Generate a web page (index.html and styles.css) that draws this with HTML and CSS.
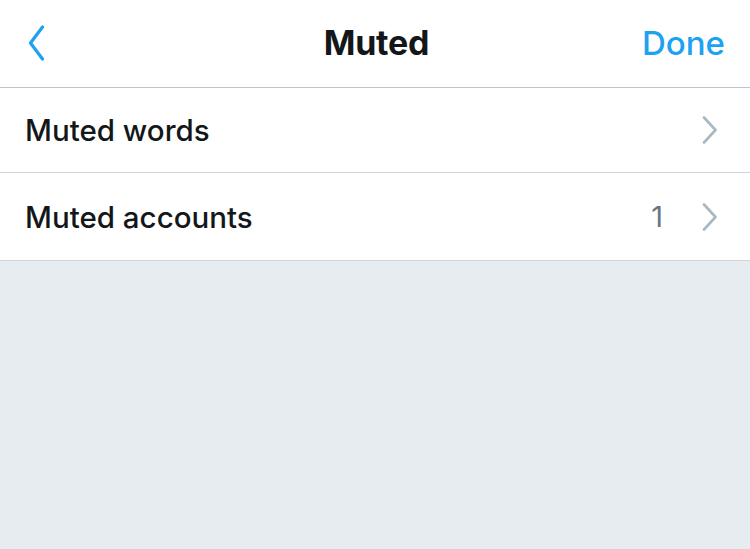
FILE: index.html
```html
<!DOCTYPE html>
<html>
<head>
<meta charset="utf-8">
<link rel="stylesheet" href="styles.css">
</head>
<body>
<div class="screen">
  <header class="nav">
    <div class="nav-left">
      <svg class="back" width="17" height="36" viewBox="0 0 17 36"><path d="M14.5 2 L2.5 18 L14.5 34" fill="none" stroke="#1da1f2" stroke-width="3.2" stroke-linecap="round" stroke-linejoin="round"/></svg>
    </div>
    <div class="nav-title">Muted</div>
    <div class="nav-right">Done</div>
  </header>
  <ul class="list">
    <li class="row row-first">
      <span class="label">Muted words</span>
      <span class="trail">
        <svg class="chev" width="16" height="28" viewBox="0 0 16 28"><path d="M2 1.5 L13.5 14 L2 26.5" fill="none" stroke="#aab8c2" stroke-width="2.6" stroke-linecap="round" stroke-linejoin="round"/></svg>
      </span>
    </li>
    <li class="row">
      <span class="label">Muted accounts</span>
      <span class="trail">
        <span class="count">1</span>
        <svg class="chev" width="16" height="28" viewBox="0 0 16 28"><path d="M2 1.5 L13.5 14 L2 26.5" fill="none" stroke="#aab8c2" stroke-width="2.6" stroke-linecap="round" stroke-linejoin="round"/></svg>
      </span>
    </li>
  </ul>
</div>
</body>
</html>
```
FILE: styles.css
```css
* { box-sizing: border-box; }
html, body { margin: 0; padding: 0; }
body {
  width: 750px;
  height: 549px;
  background: #e6ecf0;
  font-family: Inter, "Liberation Sans", sans-serif;
  color: #14171a;
  overflow: hidden;
}
.screen { display: flex; flex-direction: column; }
.nav {
  height: 88px;
  background: #fff;
  border-bottom: 1px solid #bdc5cb;
  display: grid;
  grid-template-columns: 1fr auto 1fr;
  align-items: center;
  padding: 0 25px 0 28px;
}
.nav-left { display: flex; align-items: center; }
.back { display: block; margin-top: -1px; }
.nav-title {
  font-size: 34px;
  font-weight: 700;
  letter-spacing: -0.2px;
  color: #14171a;
  margin-top: -2px;
}
.nav-right {
  justify-self: end;
  font-size: 33px;
  font-weight: 500;
  color: #1da1f2;
  margin-top: -2px;
}
.list { list-style: none; margin: 0; padding: 0; background: #fff; }
.row {
  display: flex;
  align-items: center;
  justify-content: space-between;
  padding: 0 32px 0 25px;
  border-bottom: 1px solid #ccd6dd;
  height: 88px;
}
.row-first { height: 85px; }
.label { font-size: 29.5px; font-weight: 500; color: #14171a; }
.trail { display: flex; align-items: center; gap: 39px; }
.count { font-size: 29px; color: #657786; }
.chev { display: block; }
```
